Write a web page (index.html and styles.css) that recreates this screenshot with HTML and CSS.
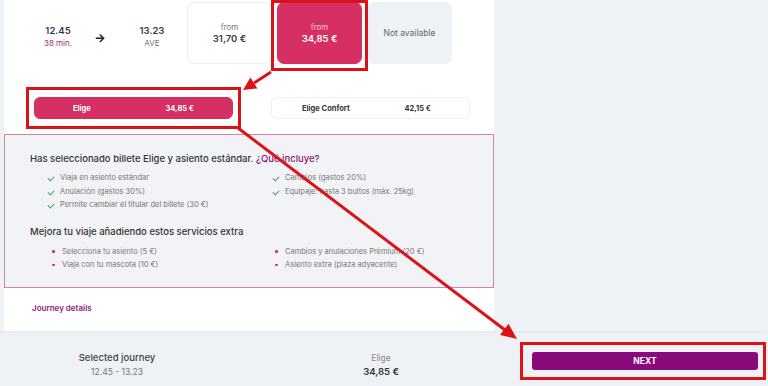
FILE: index.html
```html
<!DOCTYPE html>
<html lang="es">
<head>
<meta charset="utf-8">
<title>Journey</title>
<link rel="stylesheet" href="styles.css">
</head>
<body>
<div class="page">
  <div class="top">
    <main class="panel">
      <div class="fare-row">
        <div class="trip">
          <div class="t"><b>12.45</b><span class="dur">38 min.</span></div>
          <div class="arrow">&#8594;</div>
          <div class="t"><b>13.23</b><span>AVE</span></div>
        </div>
        <div class="fares">
          <div class="fare"><span>from</span><b>31,70 €</b></div>
          <div class="fare sel"><span>from</span><b>34,85 €</b></div>
          <div class="fare na"><span>Not available</span></div>
        </div>
      </div>
      <div class="opts">
        <div class="opt sel"><span>Elige</span><span>34,85 €</span></div>
        <div class="opt"><span>Elige Confort</span><span>42,15 €</span></div>
      </div>
      <section class="info">
        <h3>Has seleccionado billete Elige y asiento estándar. <a class="link">¿Qué incluye?</a></h3>
        <ul class="list checks">
          <li>Viaja en asiento estándar</li>
          <li>Cambios (gastos 20%)</li>
          <li>Anulación (gastos 30%)</li>
          <li>Equipaje: hasta 3 bultos (máx. 25kg)</li>
          <li>Permite cambiar el titular del billete (30 €)</li>
        </ul>
        <h3 class="h2">Mejora tu viaje añadiendo estos servicios extra</h3>
        <ul class="list dots">
          <li>Selecciona tu asiento (5 €)</li>
          <li>Cambios y anulaciones Prémium (20 €)</li>
          <li>Viaja con tu mascota (10 €)</li>
          <li>Asiento extra (plaza adyacente)</li>
        </ul>
      </section>
      <a class="details">Journey details</a>
    </main>
    <div class="side"></div>
  </div>
  <footer class="bar">
    <div class="sum"><span class="lbl">Selected journey</span><span class="sub">12.45 - 13.23</span></div>
    <div class="sum"><span class="sub2">Elige</span><b>34,85 €</b></div>
    <button class="next">NEXT</button>
  </footer>
</div>
<svg class="annot" width="768" height="386" viewBox="0 0 768 386">
  <g fill="none" stroke="#dc1219" stroke-width="3">
    <rect x="272.5" y="1.5" width="94" height="68"/>
    <rect x="27.5" y="88.5" width="212" height="39"/>
    <rect x="521.5" y="343.5" width="243" height="35"/>
    <line x1="271" y1="72" x2="254" y2="83"/>
    <line x1="238" y1="128" x2="505" y2="330"/>
  </g>
  <g fill="#dc1219">
    <polygon points="243,90 250.4,77.5 257.4,88.4"/>
    <polygon points="517,339 500,334.9 508.5,323.8"/>
  </g>
</svg>
</body>
</html>
```
FILE: styles.css
```css
* { box-sizing: border-box; margin: 0; padding: 0; }
html, body { width: 768px; height: 386px; overflow: hidden; }
body {
  background: #eef1f5;
  font-family: Inter, "Noto Sans", sans-serif;
  color: #333;
  position: relative;
}
.page { display: flex; flex-direction: column; height: 386px; }
.top { display: flex; height: 331px; }
.panel {
  width: 490px;
  margin-left: 4px;
  background: #fff;
  display: flex;
  flex-direction: column;
}
.side { flex: 1; }

.fare-row { display: flex; height: 66px; }
.trip { width: 183px; display: flex; align-items: center; padding-left: 30px; padding-top: 8px; }
.t { width: 48px; display: flex; flex-direction: column; align-items: center; line-height: 13px; }
.t b { font-size: 9.5px; font-weight: 600; color: #3a3a3a; }
.t span { font-size: 8px; color: #777; }
.t .dur { color: #a0306a; }
.arrow { width: 36px; margin-right: 10px; text-align: center; font-size: 12px; font-weight: 700; color: #222; }

.fares { display: flex; gap: 5px; padding-top: 2px; }
.fare {
  width: 85px; height: 62px;
  border: 1px solid #eceef2;
  border-radius: 7px;
  display: flex; flex-direction: column; align-items: center; justify-content: center;
  line-height: 12px;
}
.fare span { font-size: 8px; color: #777; }
.fare b { font-size: 9.5px; font-weight: 600; color: #3a3a3a; }
.fare.sel { background: #d52f63; border-color: #d52f63; }
.fare.sel span { color: #f6c2d2; }
.fare.sel b { color: #fff; }
.fare.na { background: #eef1f5; border-color: #eef1f5; }
.fare.na span { font-size: 8.5px; color: #666; }

.opts { display: flex; gap: 38px; padding-left: 30px; margin-top: 31px; }
.opt {
  width: 199px; height: 22px;
  border: 1px solid #eceef2; border-radius: 6px;
  display: flex; align-items: center; justify-content: space-between;
  padding: 0 38px 0 30px;
  font-size: 7.5px; font-weight: 700; color: #333;
}
.opt.sel { background: #d52f63; border-color: #d52f63; color: #fff; padding: 0 38px 0 38px; }

.info {
  margin-top: 15px;
  height: 154px;
  border: 1px solid #d6839d;
  background: #f1f3f6;
  padding: 17px 25px 0 25px;
}
.info h3 { font-size: 9.5px; font-weight: 500; line-height: 14px; color: #333; }
.link { color: #8b1a7c; }
.info .h2 { margin-top: 13px; }
.list { list-style: none; display: grid; grid-template-columns: 225px 1fr; margin-top: 5px; }
.list li { font-size: 7.5px; line-height: 13.5px; color: #777; position: relative; }
.checks li { padding-left: 30px; }
.checks li::before {
  content: ""; position: absolute; left: 19px; top: 4px;
  width: 3px; height: 5px;
  border-right: 1.2px solid #4aa55a; border-bottom: 1.2px solid #4aa55a;
  transform: rotate(45deg);
}
.dots { margin-top: 6px; }
.dots li { padding-left: 32px; }
.dots li::before {
  content: ""; position: absolute; left: 22px; top: 5.5px;
  width: 2.5px; height: 2.5px; border-radius: 50%; background: #d52f63;
}
.dots li:nth-child(even) { padding-left: 30px; }
.dots li:nth-child(even)::before { left: 20px; }

.details { margin: 13px 0 0 28px; font-size: 8px; font-weight: 600; color: #8b1a7c; line-height: 14px; }

.bar {
  flex: 1;
  background: #eef1f5;
  box-shadow: inset 0 2px 2px -1px #e2e5ea;
  display: flex; align-items: flex-start;
  padding-left: 4px;
}
.sum { display: flex; flex-direction: column; align-items: center; line-height: 14px; padding-top: 20px; }
.sum:first-child { width: 226px; }
.sum:nth-child(2) { width: 302px; }
.lbl { font-size: 9.5px; font-weight: 500; color: #444; }
.sub { font-size: 8.5px; color: #777; }
.sub2 { font-size: 8.5px; color: #888; }
.sum b { font-size: 9.5px; font-weight: 600; color: #333; }
.next {
  margin-top: 21px;
  width: 226px; height: 18px;
  border: none; border-radius: 3px;
  background: #8a0a7c; color: #fff;
  font-family: inherit; font-size: 8.5px; font-weight: 700;
}

.annot { position: absolute; left: 0; top: 0; pointer-events: none; }
```
